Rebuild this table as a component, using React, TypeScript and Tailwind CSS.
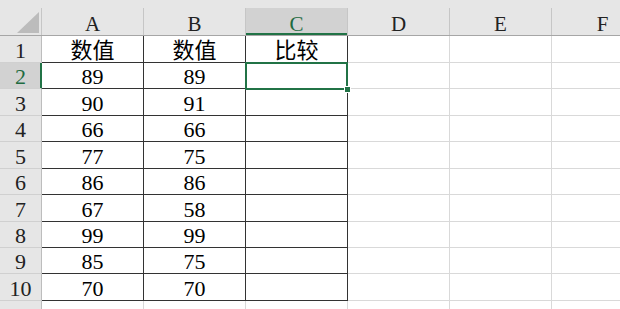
const cols = ["A", "B", "C", "D", "E", "F"];

const rows: { n: number; h: string; a?: string; b?: string; c?: string }[] = [
  { n: 1, h: "h-[27px]", a: "数值", b: "数值", c: "比较" },
  { n: 2, h: "h-[26px]", a: "89", b: "89" },
  { n: 3, h: "h-[27px]", a: "90", b: "91" },
  { n: 4, h: "h-[26px]", a: "66", b: "66" },
  { n: 5, h: "h-[27px]", a: "77", b: "75" },
  { n: 6, h: "h-[26px]", a: "86", b: "86" },
  { n: 7, h: "h-[27px]", a: "67", b: "58" },
  { n: 8, h: "h-[26px]", a: "99", b: "99" },
  { n: 9, h: "h-[26px]", a: "85", b: "75" },
  { n: 10, h: "h-[27px]", a: "70", b: "70" },
  { n: 11, h: "h-[27px]" },
];

const font = { fontFamily: '"Liberation Serif", "Noto Sans CJK SC", serif' };

function Cell({ text, inTable }: { text?: string; inTable: boolean }) {
  return (
    <div
      className={
        "w-[102px] shrink-0 flex items-center justify-center pt-[3px] text-[22px] leading-none text-black border-r border-b " +
        (inTable ? "border-r-[#333] border-b-[#333]" : "border-r-[#d9d9d9] border-b-[#d9d9d9]")
      }
    >
      {text}
    </div>
  );
}

export default function App() {
  return (
    <div className="w-[620px] h-[309px] overflow-hidden bg-white relative" style={font}>
      {/* top strip + column headers */}
      <div className="h-2 bg-[#e6e6e6]" />
      <div className="flex h-[28px] bg-[#e6e6e6] border-b border-b-[#a6a6a6]">
        <div className="w-[42px] shrink-0 relative border-r border-r-[#c6c6c6]">
          <svg width="42" height="27" className="absolute left-0 top-0">
            <polygon points="17,25 39,25 39,4" fill="#bcbcbc" />
          </svg>
        </div>
        {cols.map((c) => (
          <div
            key={c}
            className={
              "w-[102px] shrink-0 flex items-center justify-center pt-[6px] text-[21px] leading-none border-r border-r-[#c6c6c6] " +
              (c === "C" ? "bg-[#d2d2d2] text-[#1e6b41] shadow-[inset_0_-2px_0_#217346]" : "text-[#222]")
            }
          >
            {c}
          </div>
        ))}
      </div>

      {rows.map((r) => (
        <div key={r.n} className={"flex " + r.h}>
          <div
            className={
              "w-[42px] shrink-0 flex items-center justify-center pt-[3px] text-[22px] leading-none border-r border-b border-b-[#d0d0d0] " +
              (r.n === 2
                ? "bg-[#d2d2d2] text-[#1e6b41] border-r-[#217346] shadow-[inset_-1px_0_0_#217346]"
                : "bg-[#e6e6e6] text-[#222] border-r-[#bdbdbd]")
            }
          >
            {r.n}
          </div>
          <Cell text={r.a} inTable={r.n <= 10} />
          <Cell text={r.b} inTable={r.n <= 10} />
          <Cell text={r.c} inTable={r.n <= 10} />
          <Cell inTable={false} />
          <Cell inTable={false} />
          <Cell inTable={false} />
        </div>
      ))}

      {/* selected cell C2 */}
      <div className="absolute left-[245px] top-[62px] w-[103px] h-[28px] border-2 border-[#217346] pointer-events-none" />
      <div className="absolute left-[344px] top-[86px] w-[7px] h-[7px] bg-[#217346] border border-white" />
    </div>
  );
}
